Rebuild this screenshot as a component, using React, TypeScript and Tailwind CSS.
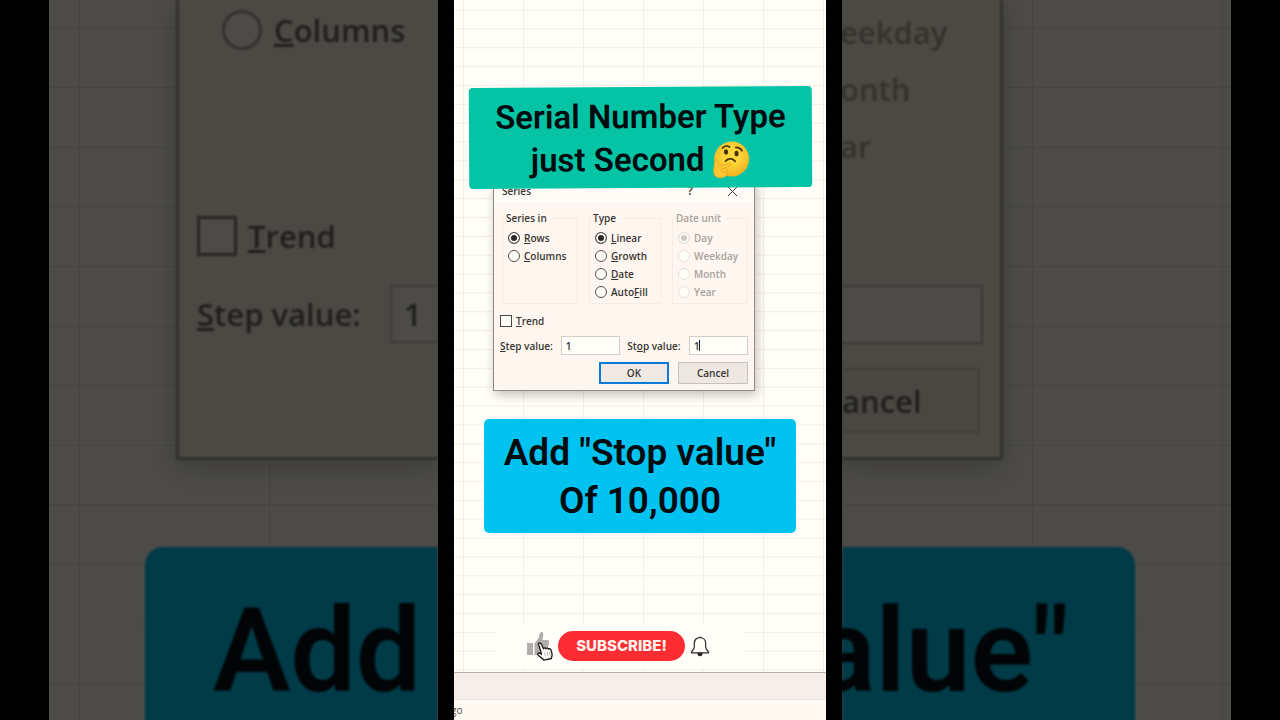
import type { ReactNode } from "react";

const dialogFont = "font-['Open_Sans','Noto_Sans',sans-serif]";
const captionFont = "font-['Roboto',sans-serif]";

const TYPES = [
  { key: "L", before: "", after: "inear" },
  { key: "G", before: "", after: "rowth" },
  { key: "D", before: "", after: "ate" },
  { key: "F", before: "Auto", after: "ill" },
];
const UNITS = ["Day", "Weekday", "Month", "Year"];

export default function App() {
  return (
    <div className="h-screen overflow-hidden bg-black px-[49px] grid grid-cols-[389fr_372fr_389fr] gap-4">
      <LeftBackdrop />
      <Phone />
      <RightBackdrop />
    </div>
  );
}

function Phone() {
  return (
    <main className="relative min-w-0 h-full overflow-hidden bg-[#fffef8] flex flex-col">
      <GridLines id="sheet" width={60} height={18.86} x={9} y={9.5} color="#f5ede6" />
      <div className="relative flex-1 min-h-0 flex flex-col items-center pt-[87px]">
        <h1 className={`${captionFont} z-10 w-[343px] h-[101px] rounded-[4px] bg-[#04c4a5] text-[#020b10] text-[33px] leading-[43px] font-semibold text-center pt-2 -rotate-[0.3deg]`}>
          Serial Number Type
          <span className="flex justify-center items-center gap-2">just Second <ThinkingFace /></span>
        </h1>
        <SeriesDialog />
        <p className={`${captionFont} mt-7 w-[312px] h-[114px] rounded-[5px] bg-[#02c2ef] text-[#020b10] text-[37px] leading-[48px] font-semibold text-center pt-[10px]`}>
          Add "Stop value"<br />Of 10,000
        </p>
        <div className="mt-auto mb-1 ml-[43px] self-start w-[248px] h-[44px] flex items-center pl-[30px] bg-[#fffef8]">
          <button aria-label="Like" className="w-[31px] h-[32px]"><ThumbWithCursor /></button>
          <button className="w-[127px] h-[30px] rounded-full bg-[#fb2d33] text-[#fff1ec] font-['Inter',sans-serif] font-extrabold text-[15px]">SUBSCRIBE!</button>
          <button aria-label="Notifications" className="ml-[5px]"><Bell /></button>
        </div>
      </div>
      <footer className="relative h-12 shrink-0 border-t border-[#b5afa9] bg-[#fff9f1]">
        <div className="h-[27px] bg-[#f6eee8] border-b border-[#eae2dc]" />
        <p className={`${dialogFont} text-[10px] leading-[20px] text-[#4d4843] -ml-[3px]`}>go</p>
      </footer>
    </main>
  );
}

function SeriesDialog() {
  return (
    <section aria-label="Series" className={`${dialogFont} -mt-[9px] ml-[39px] self-start w-[262px] shrink-0 border border-[#918b86] bg-[#fef6ef] text-[10px] leading-[14px] font-semibold text-[#3a3633] shadow-[2px_4px_10px_rgba(70,50,40,0.3)]`}>
      <header className="h-[22px] bg-[#fffcf7] flex items-center pl-2 pr-4">
        <span className="flex-1">Series</span>
        <button aria-label="Help" className="mr-[34px] text-[12px]">?</button>
        <button aria-label="Close">
          <svg className="block" width="11" height="11" viewBox="0 0 11 11" stroke="#3a3633" fill="none"><path d="M1 1l9 9M10 1l-9 9" /></svg>
        </button>
      </header>
      <div className="px-[6px] pb-[6px] pt-[9px]">
        <div className="grid grid-cols-[76px_72px_76px] gap-[11px] pl-[2px]">
          <Group title="Series in">
            <Choice name="in" checked><u>R</u>ows</Choice>
            <Choice name="in"><u>C</u>olumns</Choice>
          </Group>
          <Group title="Type">
            {TYPES.map((t, i) => (
              <Choice key={t.key} name="type" checked={i === 0}>{t.before}<u>{t.key}</u>{t.after}</Choice>
            ))}
          </Group>
          <Group title="Date unit" disabled>
            {UNITS.map((u, i) => <Choice key={u} name="unit" checked={i === 0}>{u}</Choice>)}
          </Group>
        </div>
        <label className="mt-[10px] h-[14px] flex items-center gap-1">
          <input type="checkbox" className="appearance-none size-3 border border-[#4a4643] bg-[#fffdf8]" />
          <span><u>T</u>rend</span>
        </label>
        <div className="mt-2 h-[19px] flex items-center justify-between">
          <label htmlFor="step" className="w-[53px] whitespace-nowrap"><u>S</u>tep value:</label>
          <input id="step" defaultValue="1" className="w-[59px] h-full border border-[#d5cec7] bg-[#fffef9] px-1" />
          <label htmlFor="stop" className="w-[54px] whitespace-nowrap">St<u>o</u>p value:</label>
          <div className="relative w-[59px] h-full">
            <input id="stop" defaultValue="1" className="block w-full h-full border border-[#d5cec7] bg-[#fffef9] px-1" />
            <span className="absolute left-[10px] top-1 h-[11px] w-px bg-[#222]" />
          </div>
        </div>
        <div className="mt-[7px] flex justify-end gap-[9px]">
          <button className="w-[70px] h-[22px] border-2 border-[#0a7ad8] bg-[#efe8e4]">OK</button>
          <button className="w-[70px] h-[22px] border border-[#c9c2bc] bg-[#efe8e2]">Cancel</button>
        </div>
      </div>
    </section>
  );
}

function Group({ title, disabled, children }: { title: string; disabled?: boolean; children: ReactNode }) {
  return (
    <fieldset disabled={disabled} className="min-w-0 border border-[#f7ece5] pl-[5px] pb-[2px] disabled:text-[#a8a29c]">
      <legend className="-ml-[2px] pr-1">{title}</legend>
      <div className="pt-1">{children}</div>
    </fieldset>
  );
}

function Choice({ name, checked, children }: { name: string; checked?: boolean; children: ReactNode }) {
  return (
    <label className="h-[18px] flex items-center gap-1 whitespace-nowrap">
      <input
        type="radio"
        name={name}
        defaultChecked={checked}
        className="appearance-none shrink-0 size-3 rounded-full border border-[#55504c] bg-[#fffdf8] checked:bg-[#2b2826] checked:shadow-[inset_0_0_0_2px_#fffdf8] disabled:border-[#e9e1da] disabled:checked:bg-[#cfc8c1]"
      />
      <span>{children}</span>
    </label>
  );
}

function LeftBackdrop() {
  return (
    <aside className="relative min-w-0 h-full overflow-hidden bg-[#4c4b48]">
      <GridLines id="left" width={190} height={59.6} x={30} y={27.5} color="#464441" />
      <div className={`${dialogFont} relative blur-[1px] text-[31px] leading-10 font-semibold text-[#1f1e1b]`}>
        <div className="ml-[127px] h-[460px] border-l-[3px] border-b-[3px] border-[#33312d] bg-[#4b4943] pl-[18px] pt-[10px] shadow-[0_8px_24px_rgba(0,0,0,0.2)]">
          <label className="h-10 ml-[25px] flex items-center gap-3">
            <input type="radio" className="appearance-none size-10 rounded-full border-[3px] border-[#33312d] bg-[#4c4b48]" />
            <span><u>C</u>olumns</span>
          </label>
          <label className="mt-[166px] h-10 flex items-center gap-[11px]">
            <input type="checkbox" className="appearance-none size-10 border-[3px] border-[#282622] bg-[#4c4b48]" />
            <span><u>T</u>rend</span>
          </label>
          <div className="mt-[29px] h-[58px] flex items-center">
            <label htmlFor="step-large" className="w-[193px] shrink-0 whitespace-nowrap"><u>S</u>tep value:</label>
            <input id="step-large" defaultValue="1" className="flex-1 min-w-0 h-full border-2 border-r-0 border-[#3d3b37] bg-[#4c4b48] pl-3" />
          </div>
        </div>
        <p className={`${captionFont} ml-24 mt-[87px] h-[174px] rounded-tl-[18px] bg-[#003b47] pl-[68px] pt-[34px] text-[116px] leading-[140px] font-semibold text-[#020406]`}>Add</p>
      </div>
    </aside>
  );
}

function RightBackdrop() {
  return (
    <aside className="relative min-w-0 h-full overflow-hidden bg-[#4c4b48]">
      <GridLines id="right" width={190} height={59.6} x={190} y={27.5} color="#464441" />
      <div className={`${dialogFont} relative blur-[1px] text-[31px] leading-10 font-semibold text-[#1f1e1b]`}>
        <div className="w-[161px] h-[460px] border-r-[3px] border-b-[3px] border-[#33312d] bg-[#4b4943] pt-[12px] shadow-[0_8px_24px_rgba(0,0,0,0.2)]">
          <ul className="h-[273px] -ml-[2px] flex flex-col gap-[17px] text-[#33322d]">
            <li>eekday</li>
            <li>onth</li>
            <li>ar</li>
          </ul>
          <input aria-label="Stop value" className="block w-[141px] h-[59px] border-2 border-l-0 border-[#3a3834] bg-[#4c4b48]" />
          <button className="mt-6 w-[138px] h-[65px] border-2 border-l-0 border-[#3f3d39] bg-[#494741] text-left">ancel</button>
        </div>
        <p className={`${captionFont} w-[293px] mt-[87px] h-[174px] rounded-tr-[18px] bg-[#003b47] pt-[34px] pr-[66px] flex justify-end text-[116px] leading-[140px] font-semibold text-[#020406]`}>alue"</p>
      </div>
    </aside>
  );
}

type GridProps = { id: string; width: number; height: number; x: number; y: number; color: string };

// spreadsheet cell borders
function GridLines({ id, width, height, x, y, color }: GridProps) {
  return (
    <svg className="absolute inset-0 size-full" aria-hidden="true">
      <pattern id={id} x={x} y={y} width={width} height={height} patternUnits="userSpaceOnUse">
        <path d={`M0 .5H${width}M.5 0V${height}`} stroke={color} fill="none" />
      </pattern>
      <rect width="100%" height="100%" fill={`url(#${id})`} />
    </svg>
  );
}

function ThinkingFace() {
  return (
    <svg width="38" height="38" viewBox="0 0 38 38" role="img" aria-label="Thinking face">
      <defs>
        <radialGradient id="face" cx=".5" cy=".4" r=".6">
          <stop offset=".4" stopColor="#fdd639" />
          <stop offset="1" stopColor="#f3b01f" />
        </radialGradient>
      </defs>
      <circle cx="19.500" cy="18.500" r="17.500" fill="url(#face)" />
      <path d="M10.500 7.500C12.500 5 15.500 5 17.500 6.500M23.500 7C26 6.800 28.500 8 30 10.200" fill="none" stroke="#4b3413" strokeWidth="1.700" strokeLinecap="round" />
      <ellipse cx="14" cy="11.500" rx="2.100" ry="2.700" fill="#46300f" />
      <ellipse cx="24.500" cy="13" rx="2.100" ry="2.700" fill="#46300f" />
      <path d="M13.500 20.500C16 17.500 20.500 17.500 23 20.800" fill="none" stroke="#5a3a12" strokeWidth="1.900" strokeLinecap="round" />
      <path d="M3.500 20.500c1.500-.8 2.600.2 2.800 1.800l.6 3.500 9.600-3c2-.6 3 1.500 1.200 2.500l-4.500 2.400c1.700.5 2.400 2.200 1.500 3.700.6 3.200-2.200 5.900-6.500 5.900C3.600 37.300 1.300 34.500 1.500 30c.1-3 .8-5.500.9-7.600 0-.9.400-1.600 1.100-1.900z" fill="#fbc62f" stroke="#efa823" strokeWidth=".8" />
      <path d="M8.500 28.500l4.700-.8M9.500 31.500l5-.1" stroke="#efa823" strokeWidth=".8" fill="none" />
    </svg>
  );
}

function ThumbWithCursor() {
  return (
    <svg className="block" width="31" height="32" viewBox="0 0 31 32">
      <path d="M0 13h6v12H0zM7.500 13.500L11 9c1.500-2 1.200-6.500 3.200-7 2.200-.3 2.400 3 1.800 5.500L15.400 10H20c2 0 2.500 1.500 2 3l-2.200 9.500C19.400 24 18.500 25 17 25H7.500z" fill="#b1adac" />
      <path d="M12 15.500c-1.300-1.200-.4-3 1.300-2.300.8.3 1.200 1.100 1.600 2l1.600 3.500c.5-1 2-1 2.500 0 .8-.9 2.100-.6 2.500.4 1-.7 2.200-.2 2.500.8l1 3.800c.4 2-.4 3.300-.7 4.800l-7.500 1.700c-.8-2-3.800-2.700-5.800-5.200-.7-1-.1-2.200 1.200-2 .9.100 1.600.7 2.300 1.300z" fill="#fffdf9" stroke="#1d1b1a" strokeWidth="1.300" strokeLinejoin="round" />
      <path d="M17.500 22.500l1 4M20 22l1 4M22.400 21.500l.9 3.800" stroke="#c6c0bc" strokeWidth="1.100" />
    </svg>
  );
}

function Bell() {
  return (
    <svg className="block" width="20" height="22" viewBox="0 0 20 22" fill="none" stroke="#2c2a29" strokeWidth="1.200">
      <path d="M10 1.500v1.200M10 2.700c-3.700 0-5.700 2.500-5.700 6v3.500c0 2-1.800 3.400-2.800 4.600v1h17v-1c-1-1.200-2.800-2.600-2.800-4.600V8.700c0-3.500-2-6-5.700-6z" strokeLinejoin="round" />
      <path d="M8 18.300c0 3 4 3 4 0z" fill="#1a1919" />
    </svg>
  );
}
